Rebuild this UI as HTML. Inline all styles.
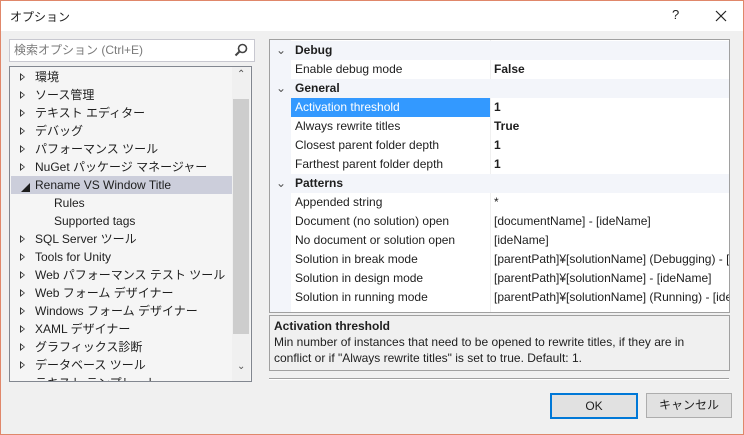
<html><head><style>
body{margin:0;width:744px;height:434px;overflow:hidden;font-family:"Segoe UI","Liberation Sans","Noto Sans CJK JP",sans-serif;font-size:12px;color:#1e1e1e}
.win{position:absolute;left:0;top:0;width:742px;height:433px;border:1px solid #e0876a;border-top:1px solid #e0876a;background:#f0f0f0}
.title{position:absolute;left:0;top:0;width:742px;height:30px;background:#fff}
.abs{position:absolute}
.tree{left:8px;top:65px;width:241px;height:314px;border:1px solid #828790;background:#f5f5f5;overflow:hidden}
.row{position:absolute;left:0;height:18px;line-height:18px;white-space:nowrap}
.tri{position:absolute;left:10px;top:5px;width:0;height:0;border-left:5px solid #333;border-top:4px solid transparent;border-bottom:4px solid transparent}
.tri:after{content:"";position:absolute;left:-4px;top:-2px;border-left:3px solid #f5f5f5;border-top:2px solid transparent;border-bottom:2px solid transparent}
.grid{left:268px;top:38px;width:459px;height:272px;border:1px solid #a0a0a0;background:#fff;overflow:hidden}
.g{position:absolute;left:0;width:459px;height:19px;line-height:18px;white-space:nowrap}
.g .n{position:absolute;left:25px}
.g .v{position:absolute;left:224px}
.cat{background:#f3f5fa;font-weight:bold}
.btn{position:absolute;height:23px;line-height:23px;text-align:center;background:#e1e1e1;border:1px solid #adadad}
</style></head><body>
<div class="win">
<div class="title"></div>
<div class="abs" style="left:9px;top:7px;font-size:12px">オプション</div>
<div class="abs" style="left:671px;top:6px;font-size:13px">?</div>
<svg class="abs" style="left:714px;top:9px" width="12" height="12"><path d="M1 1L11 11M11 1L1 11" stroke="#222" stroke-width="1.2"/></svg>
<div class="abs" style="left:8px;top:38px;width:240px;height:21px;border:1px solid #c8c8d0;background:#fff;color:#7a7a7a;line-height:21px;padding-left:4px">検索オプション (Ctrl+E)</div>
<svg class="abs" style="left:233px;top:42px" width="14" height="14"><circle cx="8.5" cy="5.5" r="4" fill="none" stroke="#444" stroke-width="1.6"/><path d="M6 8L1.5 12.5" stroke="#444" stroke-width="2"/></svg>
<div class="abs tree">
<div class="abs" style="left:222px;top:0;width:18px;height:314px;background:#f0f0f0"></div>
<div class="abs" style="left:223px;top:32px;width:16px;height:235px;background:#cdcdcd"></div>
<div class="abs" style="left:227px;top:2px;font-size:10px;color:#555">&#8963;</div>
<div class="abs" style="left:227px;top:294px;font-size:10px;color:#555">&#8964;</div>
<div class="row" style="top:1px"><span class="tri"></span><span style="margin-left:25px">環境</span></div>
<div class="row" style="top:19px"><span class="tri"></span><span style="margin-left:25px">ソース管理</span></div>
<div class="row" style="top:37px"><span class="tri"></span><span style="margin-left:25px">テキスト エディター</span></div>
<div class="row" style="top:55px"><span class="tri"></span><span style="margin-left:25px">デバッグ</span></div>
<div class="row" style="top:73px"><span class="tri"></span><span style="margin-left:25px">パフォーマンス ツール</span></div>
<div class="row" style="top:91px"><span class="tri"></span><span style="margin-left:25px">NuGet パッケージ マネージャー</span></div>
<div class="row" style="top:109px;left:1px;width:221px;background:#cccedb"><span class="abs" style="left:10px;top:3px;font-size:9px">&#9698;</span><span style="margin-left:24px">Rename VS Window Title</span></div>
<div class="row" style="top:127px"><span style="margin-left:44px">Rules</span></div>
<div class="row" style="top:145px"><span style="margin-left:44px">Supported tags</span></div>
<div class="row" style="top:163px"><span class="tri"></span><span style="margin-left:25px">SQL Server ツール</span></div>
<div class="row" style="top:181px"><span class="tri"></span><span style="margin-left:25px">Tools for Unity</span></div>
<div class="row" style="top:199px"><span class="tri"></span><span style="margin-left:25px">Web パフォーマンス テスト ツール</span></div>
<div class="row" style="top:217px"><span class="tri"></span><span style="margin-left:25px">Web フォーム デザイナー</span></div>
<div class="row" style="top:235px"><span class="tri"></span><span style="margin-left:25px">Windows フォーム デザイナー</span></div>
<div class="row" style="top:253px"><span class="tri"></span><span style="margin-left:25px">XAML デザイナー</span></div>
<div class="row" style="top:271px"><span class="tri"></span><span style="margin-left:25px">グラフィックス診断</span></div>
<div class="row" style="top:289px"><span class="tri"></span><span style="margin-left:25px">データベース ツール</span></div>
<div class="row" style="top:307px"><span style="margin-left:25px">テキスト テンプレート</span></div>
</div>
<div class="abs grid">
<div class="abs" style="left:0;top:0;width:21px;height:272px;background:#f3f5fa"></div>
<div class="abs" style="left:220px;top:0;width:1px;height:272px;background:#f0f0f0"></div>
<div class="g cat" style="top:1px"><span class="abs" style="left:6px;font-weight:normal;color:#555">&#8964;</span><span class="n">Debug</span></div>
<div class="g" style="top:20px"><span class="n">Enable debug mode</span><span class="v" style="font-weight:bold">False</span></div>
<div class="g cat" style="top:39px"><span class="abs" style="left:6px;font-weight:normal;color:#555">&#8964;</span><span class="n">General</span></div>
<div class="g" style="top:58px"><span class="abs" style="left:21px;width:199px;height:19px;background:#3399ff"></span><span class="n" style="color:#fff">Activation threshold</span><span class="v" style="font-weight:bold">1</span></div>
<div class="g" style="top:77px"><span class="n">Always rewrite titles</span><span class="v" style="font-weight:bold">True</span></div>
<div class="g" style="top:96px"><span class="n">Closest parent folder depth</span><span class="v" style="font-weight:bold">1</span></div>
<div class="g" style="top:115px"><span class="n">Farthest parent folder depth</span><span class="v" style="font-weight:bold">1</span></div>
<div class="g cat" style="top:134px"><span class="abs" style="left:6px;font-weight:normal;color:#555">&#8964;</span><span class="n">Patterns</span></div>
<div class="g" style="top:153px"><span class="n">Appended string</span><span class="v">*</span></div>
<div class="g" style="top:172px"><span class="n">Document (no solution) open</span><span class="v">[documentName] - [ideName]</span></div>
<div class="g" style="top:191px"><span class="n">No document or solution open</span><span class="v">[ideName]</span></div>
<div class="g" style="top:210px"><span class="n">Solution in break mode</span><span class="v">[parentPath]¥[solutionName] (Debugging) - [ideName]</span></div>
<div class="g" style="top:229px"><span class="n">Solution in design mode</span><span class="v">[parentPath]¥[solutionName] - [ideName]</span></div>
<div class="g" style="top:248px"><span class="n">Solution in running mode</span><span class="v">[parentPath]¥[solutionName] (Running) - [ideName]</span></div>
</div>
<div class="abs" style="left:268px;top:314px;width:455px;height:54px;border:1px solid #a0a0a0;padding-left:4px;line-height:16px">
<div style="font-weight:bold;margin-top:2px">Activation threshold</div>
<div style="width:420px">Min number of instances that need to be opened to rewrite titles, if they are in conflict or if "Always rewrite titles" is set to true. Default: 1.</div>
</div>
<div class="abs" style="left:268px;top:377px;width:460px;height:1px;background:#a0a0a0"></div>
<div class="abs" style="left:268px;top:378px;width:460px;height:1px;background:#fff"></div>
<div class="btn" style="left:549px;top:392px;width:84px;border:2px solid #0078d7;height:22px;line-height:22px">OK</div>
<div class="btn" style="left:645px;top:392px;width:84px">キャンセル</div>
</div>
</body></html>
